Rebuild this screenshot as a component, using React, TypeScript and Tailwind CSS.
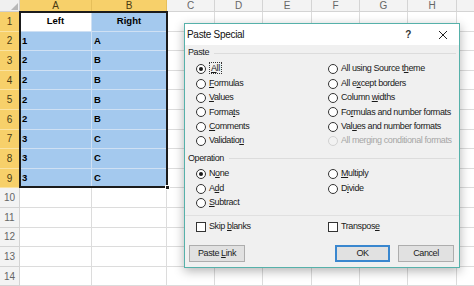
import React from "react";

const cols = [
  { label: "A", w: "w-[72px]", sel: true },
  { label: "B", w: "w-[75px]", sel: true },
  { label: "C", w: "w-[48px]", sel: false },
  { label: "D", w: "w-[48px]", sel: false },
  { label: "E", w: "w-[49px]", sel: false },
  { label: "F", w: "w-[48px]", sel: false },
  { label: "G", w: "w-[48px]", sel: false },
  { label: "H", w: "w-[49px]", sel: false },
  { label: "", w: "w-[40px]", sel: false },
];

const data = [
  ["Left", "Right"],
  ["1", "A"],
  ["2", "B"],
  ["2", "B"],
  ["2", "B"],
  ["2", "B"],
  ["3", "C"],
  ["3", "C"],
  ["3", "C"],
];

const Radio = ({
  children,
  checked,
  disabled,
}: {
  children: React.ReactNode;
  checked?: boolean;
  disabled?: boolean;
}) => (
  <div className="flex h-[14.4px] items-center gap-[3px]">
    <span
      className={`flex h-[10px] w-[10px] shrink-0 items-center justify-center rounded-full border ${
        disabled ? "border-[#d2d2d2] bg-[#f2f2f2]" : "border-[#333] bg-white"
      }`}
    >
      {checked && <span className="h-[4px] w-[4px] rounded-full bg-[#1a1a1a]" />}
    </span>
    <span className={`whitespace-nowrap ${disabled ? "text-[#a6a6a6]" : "text-[#1a1a1a]"}`}>{children}</span>
  </div>
);

const Check = ({ children }: { children: React.ReactNode }) => (
  <div className="flex h-[14px] items-center gap-[3px]">
    <span className="h-[10px] w-[10px] shrink-0 border border-[#333] bg-white" />
    <span className="text-[#1a1a1a]">{children}</span>
  </div>
);

const GroupLabel = ({ children }: { children: React.ReactNode }) => (
  <div className="flex h-[14px] items-center pl-[3px] pr-[3px]">
    <span className="text-[#1a1a1a]">{children}</span>
    <span className="ml-[5px] h-px flex-1 bg-[#dcdcdc]" />
  </div>
);

const PasteSpecial = () => (
  <div className="absolute left-[184px] top-[23px] flex h-[245px] w-[276px] flex-col border border-[#56b1aa] bg-[#f0f0f0] text-[9px] tracking-[-0.4px] shadow-[0_3px_10px_rgba(0,0,0,0.3)] [font-family:'Liberation_Sans',Arial,sans-serif]">
    <div className="flex h-[21px] items-center bg-white pl-[2px]">
      <span className="text-[10px] tracking-[-0.3px] text-[#111]">Paste Special</span>
      <div className="ml-auto flex items-center pr-[11px]">
        <span className="w-[10px] text-center text-[10px] font-bold text-[#333]">?</span>
        <svg className="ml-[25px]" width="10" height="10" viewBox="0 0 10 10">
          <path d="M1 1 L9 9 M9 1 L1 9" stroke="#222" strokeWidth="1" />
        </svg>
      </div>
    </div>

    <div className="mt-[1px]">
      <GroupLabel>Paste</GroupLabel>
    </div>
    <div className="mt-[2px] grid grid-cols-[132px_1fr] pl-[11px]">
      <Radio checked>
        <span className="border border-dotted border-[#333] px-[1px] py-0">
          <u>A</u>ll
        </span>
      </Radio>
      <Radio>
        All using Source t<u>h</u>eme
      </Radio>
      <Radio>
        <u>F</u>ormulas
      </Radio>
      <Radio>
        All e<u>x</u>cept borders
      </Radio>
      <Radio>
        <u>V</u>alues
      </Radio>
      <Radio>
        Column <u>w</u>idths
      </Radio>
      <Radio>
        Forma<u>t</u>s
      </Radio>
      <Radio>
        Fo<u>r</u>mulas and number formats
      </Radio>
      <Radio>
        <u>C</u>omments
      </Radio>
      <Radio>
        Val<u>u</u>es and number formats
      </Radio>
      <Radio>
        Validatio<u>n</u>
      </Radio>
      <Radio disabled>All merging conditional formats</Radio>
    </div>

    <div className="mt-[3px]">
      <GroupLabel>Operation</GroupLabel>
    </div>
    <div className="mt-[1.6px] grid grid-cols-[132px_1fr] pl-[11px]">
      <Radio checked>
        N<u>o</u>ne
      </Radio>
      <Radio>
        <u>M</u>ultiply
      </Radio>
      <Radio>
        A<u>d</u>d
      </Radio>
      <Radio>
        D<u>i</u>vide
      </Radio>
      <Radio>
        <u>S</u>ubtract
      </Radio>
    </div>

    <div className="mt-[5px] h-px bg-[#e0e0e0]" />

    <div className="mt-[4px] grid grid-cols-[132px_1fr] pl-[11px]">
      <Check>
        Skip <u>b</u>lanks
      </Check>
      <Check>
        Transpos<u>e</u>
      </Check>
    </div>

    <div className="mt-[11px] flex pl-[4px] pr-[5px]">
      <button className="h-[17px] w-[56px] border border-[#adadad] bg-[#e1e1e1] text-[#1a1a1a]">
        Paste <u>L</u>ink
      </button>
      <button className="ml-auto h-[17px] w-[55px] border-2 border-[#3a87cf] bg-[#e1e1e1] text-[#1a1a1a]">
        OK
      </button>
      <button className="ml-[8px] h-[17px] w-[56px] border border-[#adadad] bg-[#e1e1e1] text-[#1a1a1a]">
        Cancel
      </button>
    </div>
  </div>
);

export default function App() {
  const rows = Array.from({ length: 14 }, (_, i) => i + 1);
  return (
    <div className="relative h-[286px] w-[474px] overflow-hidden bg-white [font-family:'Liberation_Sans',Arial,sans-serif]">
      {/* column headers */}
      <div className="flex h-[12px]">
        <div className="relative w-[20px] shrink-0 border-b border-r border-[#cfcfcf] bg-[#f0f0f0]">
          <span className="absolute bottom-[1px] right-[1px] h-0 w-0 border-b-[7px] border-l-[7px] border-b-[#b7b7b7] border-l-transparent" />
        </div>
        {cols.map((c, i) => (
          <div
            key={i}
            className={`${c.w} flex shrink-0 items-center justify-center border-b border-r text-[10px] ${
              c.sel
                ? "border-b-[#d89e2a] border-r-[#e6bf5a] bg-[#f7d06a] text-[#4a3a12]"
                : "border-[#d4d4d4] bg-[#f3f3f3] text-[#666]"
            }`}
          >
            {c.label}
          </div>
        ))}
      </div>

      {rows.map((r) => {
        const inSel = r <= 9;
        const vals = data[r - 1];
        return (
          <div key={r} className="flex h-[19.6px]">
            <div
              className={`flex w-[20px] shrink-0 items-center justify-center border-b border-r text-[10px] ${
                inSel
                  ? "border-b-[#fae3a2] border-r-[#d89e2a] bg-[#f7d06a] text-[#4a3a12]"
                  : "border-[#d4d4d4] bg-[#f3f3f3] text-[#666]"
              }`}
            >
              {r}
            </div>
            {cols.map((c, ci) => {
              const selCell = inSel && ci < 2;
              const active = r === 1 && ci === 0;
              const txt = vals && ci < 2 ? vals[ci] : "";
              return (
                <div
                  key={ci}
                  className={`${c.w} flex shrink-0 items-center border-b border-r text-[9.5px] font-bold text-black ${
                    r === 1 ? "justify-center" : "pl-[2px]"
                  } ${
                    active
                      ? "border-[#cfe0f3] bg-white"
                      : selCell
                        ? "border-[#cfe0f3] bg-[#a4c9ee]"
                        : "border-[#dcdcdc] bg-white"
                  }`}
                >
                  {txt}
                </div>
              );
            })}
          </div>
        );
      })}

      {/* selection outline + fill handle */}
      <div className="pointer-events-none absolute left-[19px] top-[11px] h-[177px] w-[149px] border-2 border-[#1b1b1b]" />
      <div className="absolute left-[165px] top-[185px] h-[5px] w-[5px] border border-white bg-[#1b1b1b]" />

      <PasteSpecial />
    </div>
  );
}
